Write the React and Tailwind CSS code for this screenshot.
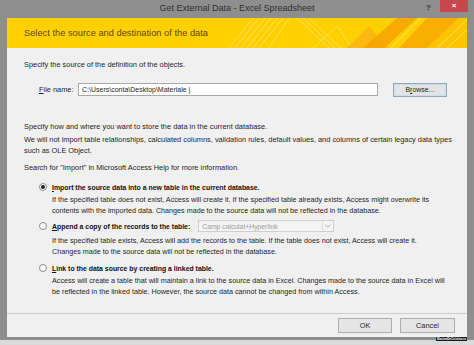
import React from 'react';

const font = { fontFamily: '"Liberation Sans", Arial, sans-serif' };

// Small radio button drawn with css
function Radio({ checked }) {
  return (
    <span className="w-[8px] h-[8px] rounded-full border border-[#8a8a8a] bg-white flex items-center justify-center shrink-0">
      {checked && <span className="w-[4px] h-[4px] rounded-full bg-[#222]" />}
    </span>
  );
}

function Option({ checked, label, accent, children, extra, className }) {
  return (
    <div className={className}>
      <div className="flex items-center h-[12px] pl-[15px]">
        <Radio checked={checked} />
        <span className="ml-[5px] font-bold text-[#111] text-[6.9px] whitespace-nowrap">
          <u>{accent}</u>
          {label}
        </span>
        {extra}
      </div>
      <div className="pl-[28px] mt-[1px] text-[7.2px] whitespace-nowrap">{children}</div>
    </div>
  );
}

function Banner() {
  return (
    <div className="relative h-[30px] bg-[#ffd000] overflow-hidden">
      {/* decorative stripes on the right of the banner */}
      <svg className="absolute inset-0" width="460" height="30" viewBox="0 0 460 30">
        <g stroke="#ffe680" strokeWidth="0.8" fill="none" opacity="0.9">
          <line x1="222" y1="30" x2="246" y2="0" />
          <line x1="228" y1="30" x2="252" y2="0" />
          <line x1="234" y1="30" x2="258" y2="0" />
          <line x1="240" y1="30" x2="264" y2="0" />
          <line x1="246" y1="30" x2="270" y2="0" />
          <line x1="252" y1="30" x2="276" y2="0" />
          <line x1="262" y1="30" x2="282" y2="0" />
          <line x1="290" y1="0" x2="322" y2="30" />
          <line x1="296" y1="0" x2="328" y2="30" />
          <line x1="302" y1="0" x2="334" y2="30" />
          <line x1="306" y1="30" x2="330" y2="8" />
          <line x1="330" y1="8" x2="345" y2="30" />
        </g>
        <polygon points="340,30 362,8 380,30" fill="#fbb810" />
        <polygon points="356,30 390,0 410,0 378,30" fill="#f7a400" opacity="0.9" />
        <polygon points="392,30 420,0 452,0 420,30" fill="#f8ae00" />
        <polygon points="420,30 452,0 460,0 460,30" fill="#ffc400" />
        <g stroke="#ffe680" strokeWidth="0.8" fill="none">
          <line x1="384" y1="30" x2="414" y2="0" />
          <line x1="430" y1="30" x2="460" y2="2" />
          <line x1="440" y1="30" x2="460" y2="12" />
        </g>
      </svg>
      <div className="relative pl-[17px] leading-[30px] text-[9.3px] text-[#5e4700]">
        Select the source and destination of the data
      </div>
    </div>
  );
}

export default function App() {
  return (
    <div className="w-[474px] h-[345px] bg-[#dadada] overflow-hidden" style={font}>
      <div className="h-[340px] bg-[#8e8e8e] px-[7px] pb-[3px] flex flex-col">
        {/* title bar */}
        <div className="relative h-[18px] flex items-center justify-center">
          <span className="text-[9px] text-[#2e2e2e]">Get External Data - Excel Spreadsheet</span>
          <span className="absolute right-[36px] top-[2px] text-[8px] font-bold text-[#333]">?</span>
          <div className="absolute right-[-1px] top-0 w-[28px] h-[12px] bg-[#c8474c] flex items-center justify-center text-white text-[8px] font-bold">
            ×
          </div>
        </div>

        <Banner />

        <div className="flex-1 bg-[#f0f0f0] flex flex-col text-[7.4px] leading-[11px] text-[#1e1e1e]">
          <div className="flex-1 pl-[17px] pr-[12px]">
            <div className="mt-[11px]">Specify the source of the definition of the objects.</div>

            <div className="flex items-center mt-[12px] h-[15px]">
              <span className="ml-[15px] w-[39px]">
                <u>F</u>ile name:
              </span>
              <div className="w-[300px] h-[13px] border border-[#a8a8a8] bg-white flex items-center pl-[3px] text-[7px]">
                C:\Users\conta\Desktop\Materiale |
              </div>
              <div className="ml-[15px] w-[54px] h-[14px] border border-[#8fa6bc] bg-[#e3e3e3] flex items-center justify-center text-[7px] shadow-[inset_0_0_0_1px_#d0dbe6]">
                B<u>r</u>owse...
              </div>
            </div>

            <div className="mt-[24px]">
              Specify how and where you want to store the data in the current database.
            </div>
            <div className="mt-[2px] whitespace-nowrap">
              We will not import table relationships, calculated columns, validation rules, default values, and columns of certain legacy data types
              <br />
              such as OLE Object.
            </div>
            <div className="mt-[6px]">Search for "Import" in Microsoft Access Help for more information.</div>

            <Option className="mt-[8px]" checked accent="I" label="mport the source data into a new table in the current database.">
              If the specified table does not exist, Access will create it. If the specified table already exists, Access might overwrite its
              <br />
              contents with the imported data. Changes made to the source data will not be reflected in the database.
            </Option>

            <Option
              className="mt-[4px]"
              accent="A"
              label="ppend a copy of the records to the table:"
              extra={
                <div className="ml-[8px] w-[136px] h-[12px] border border-[#cfcfcf] bg-[#f4f4f4] flex items-center text-[#9a9a9a] text-[6.8px]">
                  <span className="flex-1 pl-[3px]">Camp calculat+Hyperlink</span>
                  <span className="w-[11px] h-full border-l border-[#dedede] flex items-center justify-center">
                    <svg width="6" height="4" viewBox="0 0 6 4">
                      <path d="M0.5 0.8 L3 3.2 L5.5 0.8" stroke="#a0a0a0" strokeWidth="0.8" fill="none" />
                    </svg>
                  </span>
                </div>
              }
            >
              <div className="mt-[3px]">
                If the specified table exists, Access will add the records to the table. If the table does not exist, Access will create it.
                <br />
                Changes made to the source data will not be reflected in the database.
              </div>
            </Option>

            <Option className="mt-[5px]" accent="L" label="ink to the data source by creating a linked table.">
              Access will create a table that will maintain a link to the source data in Excel. Changes made to the source data in Excel will
              <br />
              be reflected in the linked table. However, the source data cannot be changed from within Access.
            </Option>
          </div>

          {/* footer */}
          <div className="relative h-[24px] border-t border-[#cdcdcd] flex items-start justify-end pr-[12px] pt-[4px] gap-[8px]">
            <div className="w-[54px] h-[15px] border border-[#adadad] bg-[#e5e5e5] flex items-center justify-center text-[7.4px]">
              OK
            </div>
            <div className="w-[55px] h-[15px] border border-[#adadad] bg-[#e5e5e5] flex items-center justify-center text-[7.4px]">
              Cancel
            </div>
            <span className="absolute right-[0px] bottom-[-4px] bg-[#1a1a1a] text-white text-[3px] leading-[4px] px-[1px] font-bold">
              MasinaDeCristina.ro
            </span>
          </div>
        </div>
      </div>
    </div>
  );
}
